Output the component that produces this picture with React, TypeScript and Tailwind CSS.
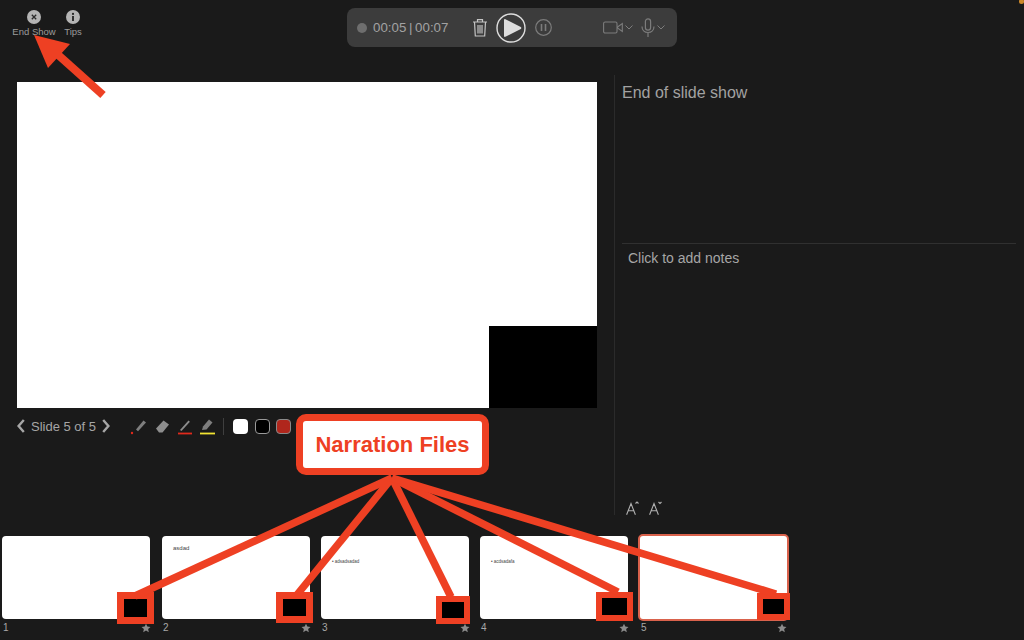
import React from "react";

const RED = "#ee4023";

function Thumb({ n, selected, children, box, black, outer }: { n: number; selected?: boolean; children?: React.ReactNode; box: string; black: string; outer?: string }) {
  return (
    <div className={(selected ? "w-[151px] shrink-0 " : "w-[148px] shrink-0 ") + (outer ?? "")}>
      <div className={selected ? "relative h-[87px] -mt-[2px] rounded-[5px] bg-white border-2 border-[#d9624c]" : "relative h-[83px] rounded-[4px] bg-white"}>
        {children}
      </div>
      <div className={selected ? "relative flex justify-between items-center h-[14px] pl-[3px] pr-[4px] text-[10px] text-[#a8a8a8] leading-none" : "relative flex justify-between items-center h-[17px] pl-[1px] pr-[1px] text-[10px] text-[#a8a8a8] leading-none"}>
        <span>{n}</span>
        <svg width="10" height="10" viewBox="0 0 24 24" className="mr-[-2px]" fill="#8c8c8c"><path d="M12 1.5l3.2 7 7.6.8-5.7 5.1 1.6 7.6L12 18.2 5.3 22l1.6-7.6L1.2 9.3l7.6-.8z" /></svg>
      </div>
      <div className={box}><div className={black} /></div>
    </div>
  );
}

export default function App() {
  return (
    <div className="relative w-[1024px] h-[640px] overflow-hidden bg-[#1a1a1a] font-['Liberation_Sans',Arial,sans-serif] text-[#a6a6a6]">
      <header className="relative h-[75px] flex items-start">
        <div className="flex pl-[13px] pt-[10px] gap-[9px]">
          <div className="flex flex-col items-center w-[42px]">
            <svg width="14" height="14" viewBox="0 0 14 14">
              <circle cx="7" cy="7" r="7" fill="#b4b4b4" />
              <path d="M4.8 4.8l4.4 4.4M9.2 4.8l-4.4 4.4" stroke="#2a2a2a" strokeWidth="1.3" />
            </svg>
            <span className="text-[9.5px] leading-none mt-[3px] whitespace-nowrap text-[#9a9a9a]">End Show</span>
          </div>
          <div className="flex flex-col items-center w-[18px]">
            <svg width="14" height="14" viewBox="0 0 14 14">
              <circle cx="7" cy="7" r="7" fill="#b4b4b4" />
              <rect x="6.1" y="6" width="1.8" height="5" fill="#222" />
              <circle cx="7" cy="3.9" r="1.1" fill="#222" />
            </svg>
            <span className="text-[9.5px] leading-none mt-[3px] text-[#9a9a9a]">Tips</span>
          </div>
        </div>
        <div className="ml-[265px] mt-[8px] w-[330px] h-[39px] rounded-[8px] bg-[#3c3c3c] flex items-center pl-[10px]">
          <span className="w-[10px] h-[10px] rounded-full bg-[#6e6e6e]" />
          <span className="ml-[6px] text-[13.3px] text-[#a2a2a2] whitespace-nowrap w-[77px] [word-spacing:-1px]">00:05 | 00:07</span>
          <svg className="ml-[22px]" width="16" height="19" viewBox="0 0 16 19" fill="none" stroke="#c4c4c4" strokeWidth="1.2">
            <path d="M1 4h14M5.5 4V1.6h5V4M2.5 4l.8 14h9.4l.8-14M6 7v8.5M8 7v8.5M10 7v8.5" />
          </svg>
          <svg className="ml-[8px]" width="30" height="30" viewBox="0 0 30 30">
            <circle cx="15" cy="15" r="14" fill="none" stroke="#dedede" strokeWidth="1.4" />
            <path d="M8 7c0-.8.7-1.2 1.4-.8l15.4 7.8c.7.4.7 1.5 0 1.9L9.4 23.8c-.7.4-1.4 0-1.4-.8z" fill="#dedede" />
          </svg>
          <svg className="ml-[9px]" width="17" height="17" viewBox="0 0 17 17" fill="none" stroke="#7c7c7c" strokeWidth="1.2">
            <circle cx="8.5" cy="8.5" r="7.8" />
            <path d="M6.5 5v7M10.5 5v7" strokeWidth="1.6" />
          </svg>
          <svg className="ml-[51px]" width="20" height="13" viewBox="0 0 20 13" fill="none" stroke="#7c7c7c" strokeWidth="1.1">
            <rect x="0.6" y="1" width="13.4" height="11" rx="1.5" />
            <path d="M14.5 6l4.8-3.4v7.8L14.5 7z" />
          </svg>
          <svg className="ml-[2px]" width="8" height="5" viewBox="0 0 8 5" fill="none" stroke="#7c7c7c" strokeWidth="1"><path d="M.5.5L4 4 7.5.5" /></svg>
          <svg className="ml-[8px]" width="14" height="20" viewBox="0 0 14 20" fill="none" stroke="#7c7c7c" strokeWidth="1.2">
            <rect x="4.4" y="0.8" width="5.2" height="11.4" rx="2.6" />
            <path d="M1 8.5c0 3.5 2.4 6 6 6s6-2.5 6-6M7 14.5V19" />
          </svg>
          <svg className="ml-[2px]" width="8" height="5" viewBox="0 0 8 5" fill="none" stroke="#7c7c7c" strokeWidth="1"><path d="M.5.5L4 4 7.5.5" /></svg>
        </div>
      </header>

      <main className="flex h-[461px]">
        <section className="w-[614px] shrink-0 pl-[17px] pt-[7px]">
          <div className="relative w-[580px] h-[326px] bg-white">
            <div className="absolute right-0 bottom-0 w-[108px] h-[82px] bg-black" />
          </div>
          <div className="flex items-center h-[34px] mt-[1px]">
            <svg width="8" height="14" viewBox="0 0 8 14" fill="none" stroke="#a6a6a6" strokeWidth="2.4"><path d="M6.8 1L1.6 7l5.2 6" /></svg>
            <span className="ml-[6px] w-[65px] text-[13px] leading-none whitespace-nowrap">Slide 5 of 5</span>
            <svg className="ml-[6px]" width="8" height="14" viewBox="0 0 8 14" fill="none" stroke="#a6a6a6" strokeWidth="2.4"><path d="M1.2 1l5.2 6-5.2 6" /></svg>
            <svg className="ml-[20px]" width="17" height="17" viewBox="0 0 17 17">
              <circle cx="2" cy="15" r="1.2" fill="#e02a1c" />
              <path d="M6 11.5L13.5 2.5l2.5 2L8 13.3z" fill="#7e7e7e" />
            </svg>
            <svg className="ml-[8px]" width="15" height="15" viewBox="0 0 15 15">
              <path d="M1 9.5L8.5 1.5l5.5 4-6.5 8H4z" fill="#8e8e8e" />
            </svg>
            <svg className="ml-[8px]" width="14" height="17" viewBox="0 0 14 17">
              <path d="M2 12L10.5 2.5l1.4 1.3L3.5 13z" fill="#8e8e8e" />
              <rect x="0" y="14.6" width="14" height="1.8" fill="#e02a1c" />
            </svg>
            <svg className="ml-[8px]" width="15" height="17" viewBox="0 0 15 17">
              <path d="M2 12l1-3.5 6-7 3.5 3-6 7z" fill="#7e7e7e" />
              <rect x="0" y="14.6" width="15" height="1.8" fill="#f2e332" />
            </svg>
            <span className="ml-[8px] w-px h-[17px] bg-[#3f3f3f]" />
            <span className="ml-[9px] w-[15px] h-[15px] rounded-[4px] bg-white" />
            <span className="ml-[7px] w-[15px] h-[15px] rounded-[4px] bg-black border border-[#9a9a9a]" />
            <span className="ml-[6px] w-[15px] h-[15px] rounded-[4px] bg-[#b0261c] border border-[#8a8a8a]" />
          </div>
        </section>
        <aside className="w-[410px] h-[440px] border-l border-[#2b2b2b] pl-[7px] flex flex-col">
          <div className="h-[169px] border-b border-[#303030] mr-[8px]">
            <p className="mt-[8px] text-[16px] leading-[19px] text-[#a2a2a2]">End of slide show</p>
          </div>
          <p className="mt-[6px] ml-[6px] text-[14px] leading-[17px] text-[#a6a6a6]">Click to add notes</p>
          <div className="mt-auto ml-[4px] flex gap-[10px]">
            <svg width="13" height="14" viewBox="0 0 13 14" fill="none" stroke="#b0b0b0" strokeWidth="1.1"><path d="M.6 13.8L5 2.5l4.4 11.3M2.2 9.8h5.6M9.5 2.5L11 1l1.5 1.5" /></svg>
            <svg width="13" height="14" viewBox="0 0 13 14" fill="none" stroke="#b0b0b0" strokeWidth="1.1"><path d="M.6 13.8L5 2.5l4.4 11.3M2.2 9.8h5.6M9.5 1L11 2.5 12.5 1" /></svg>
          </div>
        </aside>
      </main>

      <footer className="flex pl-[2px] gap-[11px]">
        <Thumb n={1} outer="mr-[1px]" box="absolute left-[117px] top-[592px] w-[37px] h-[32px] border-[7px] border-[#ee4023]" black="w-full h-full bg-black" />
        <Thumb n={2} box="absolute left-[276px] top-[592px] w-[37px] h-[31px] border-[7px] border-[#ee4023]" black="w-full h-full bg-black">
          <span className="absolute left-[11px] top-[9px] text-[6px] leading-none text-[#444]">asdad</span>
        </Thumb>
        <Thumb n={3} box="absolute left-[436px] top-[596px] w-[34px] h-[28px] border-[6px] border-[#ee4023]" black="w-full h-full bg-black">
          <span className="absolute left-[11px] top-[24px] text-[4.5px] leading-none text-[#444]">• adsadsadad</span>
        </Thumb>
        <Thumb n={4} box="absolute left-[596px] top-[592px] w-[37px] h-[29px] border-[6px] border-[#ee4023]" black="w-full h-full bg-black">
          <span className="absolute left-[11px] top-[24px] text-[4.5px] leading-none text-[#444]">• acdsadafa</span>
        </Thumb>
        <Thumb n={5} selected outer="-ml-[1px]" box="absolute left-[757px] top-[593px] w-[33px] h-[27px] border-[6px] border-[#ee4023]" black="w-full h-full bg-black" />
      </footer>

      <span className="absolute right-0 top-0 w-[5px] h-[5px] -mt-[1px] rounded-full bg-[#d08a2a]" />

      <svg className="absolute inset-0 pointer-events-none" width="1024" height="640" viewBox="0 0 1024 640">
        <polygon points="34,35 70,44 48,68" fill={RED} />
        <line x1="56" y1="53" x2="103" y2="95" stroke={RED} strokeWidth="8" />
        <g stroke={RED} strokeWidth="7.5">
          <line x1="392" y1="478" x2="135" y2="596" />
          <line x1="392" y1="478" x2="296" y2="596" />
          <line x1="392" y1="478" x2="451" y2="597" />
          <line x1="392" y1="478" x2="618" y2="592" />
          <line x1="392" y1="478" x2="776" y2="594" />
        </g>
      </svg>

      <div className="absolute left-[296px] top-[414px] w-[193px] h-[61px] rounded-[10px] border-[7px] border-[#ee4023] bg-white flex items-center justify-center">
        <span className="text-[22px] font-bold leading-none text-[#ee4023] whitespace-nowrap">Narration Files</span>
      </div>
    </div>
  );
}
